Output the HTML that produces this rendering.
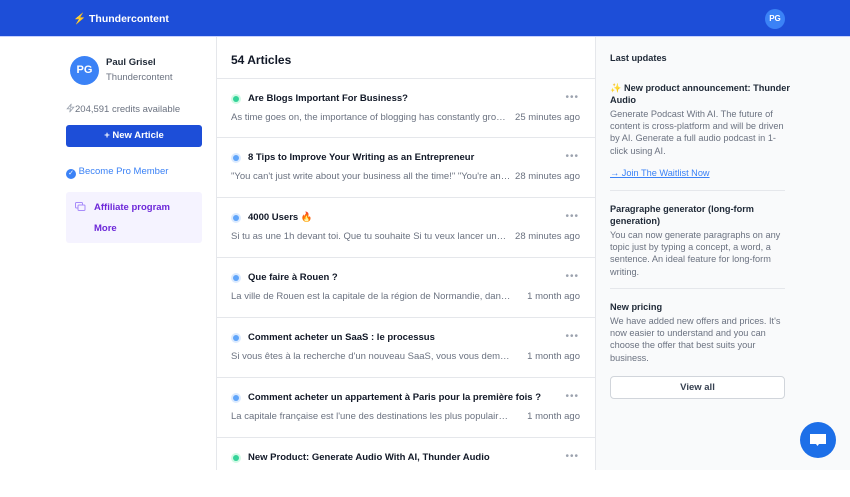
<!DOCTYPE html>
<html><head><style>
*{box-sizing:border-box;margin:0;padding:0}
body{width:850px;height:470px;overflow:hidden;font-family:"Liberation Sans",sans-serif;background:#fff;position:relative;color:#111827}
.hdr{position:absolute;left:0;top:0;width:850px;height:37px;background:#1d4ed8;border-bottom:1px solid #c7d2fe}
.abs{position:absolute;white-space:nowrap}
.left{position:absolute;left:0;top:37px;width:217px;height:433px;border-right:1px solid #e5e7eb}
.mid{position:absolute;left:217px;top:37px;width:378px;height:433px}
.right{position:absolute;left:595px;top:37px;width:255px;height:433px;background:#f9fafb;border-left:1px solid #e5e7eb}
.row{position:absolute;left:0;width:378px;height:60px;border-top:1px solid #e5e7eb}
.dot{position:absolute;left:16px;top:17px;width:6px;height:6px;border-radius:50%;box-shadow:0 0 0 2px}
.t{position:absolute;left:31px;top:14px;font-size:9.5px;font-weight:bold;color:#111827;white-space:nowrap}
.e{position:absolute;left:14px;top:33px;font-size:9.5px;color:#6b7280;width:280px;white-space:nowrap;overflow:hidden;text-overflow:ellipsis}
.tm{position:absolute;right:15px;top:33px;font-size:9.5px;color:#6b7280;white-space:nowrap}
.dd{position:absolute;right:16px;top:13px;font-size:10px;color:#9ca3af;letter-spacing:1px}
.rp{position:absolute;left:14px;width:180px;font-size:9.2px;line-height:12.2px;color:#6b7280}
.rt{position:absolute;left:14px;width:180px;font-size:9.2px;line-height:12.2px;font-weight:bold;color:#1f2937}
.sep{position:absolute;left:14px;width:175px;height:1px;background:#e5e7eb}
</style></head><body>
<div class="hdr">
<div class="abs" style="left:73px;top:12px;font-size:10.5px;font-weight:bold;color:#fff"><span style="color:#fbbf24">⚡</span> Thundercontent</div>
<div class="abs" style="left:765px;top:9px;width:20px;height:20px;border-radius:50%;background:#3b82f6;color:#fff;font-size:8px;font-weight:bold;text-align:center;line-height:20px">PG</div>
</div>
<div class="left">
<div class="abs" style="left:70px;top:19px;width:29px;height:29px;border-radius:50%;background:#3b82f6;color:#fff;font-size:11px;font-weight:bold;text-align:center;line-height:29px">PG</div>
<div class="abs" style="left:106px;top:20px;font-size:9.5px;font-weight:bold;color:#1f2937">Paul Grisel</div>
<div class="abs" style="left:106px;top:35px;font-size:9.5px;color:#6b7280">Thundercontent</div>
<div class="abs" style="left:66px;top:66px;font-size:9.5px;color:#6b7280"><svg width="9" height="10" viewBox="0 0 10 12" style="vertical-align:-1px"><path d="M6 1L1 7h4l-1 4 5-6H5z" fill="none" stroke="#9ca3af" stroke-width="1"/></svg>204,591 credits available</div>
<div class="abs" style="left:66px;top:88px;width:136px;height:22px;background:#1d4ed8;border-radius:3px;color:#fff;font-size:9.5px;font-weight:bold;text-align:center;line-height:22px">+ New Article</div>
<div class="abs" style="left:66px;top:129px;font-size:9.5px;color:#3b82f6"><span style="display:inline-block;width:10px;height:10px;border-radius:50%;background:#3b82f6;color:#fff;font-size:7px;text-align:center;line-height:10px;vertical-align:-1px">✓</span> Become Pro Member</div>
<div class="abs" style="left:66px;top:155px;width:136px;height:51px;background:#f5f3ff;border-radius:3px">
<svg class="abs" style="left:9px;top:10px" width="11" height="10" viewBox="0 0 11 10"><rect x="0.5" y="0.5" width="7" height="5.5" rx="1" fill="none" stroke="#a78bfa"/><rect x="3" y="3" width="7" height="5.5" rx="1" fill="#f5f3ff" stroke="#a78bfa"/></svg>
<div class="abs" style="left:28px;top:10px;font-size:9.5px;font-weight:bold;color:#6d28d9">Affiliate program</div>
<div class="abs" style="left:28px;top:31px;font-size:9.5px;font-weight:bold;color:#6d28d9">More</div>
</div>
</div>
<div class="mid">
<div class="abs" style="left:14px;top:16px;font-size:12px;font-weight:bold">54 Articles</div>
<div class="row" style="top:41px"><div class="dot" style="background:#34d399;color:#d1fae5"></div><div class="t">Are Blogs Important For Business?</div><div class="dd">•••</div><div class="e">As time goes on, the importance of blogging has constantly grown in the modern world</div><div class="tm">25 minutes ago</div></div>
<div class="row" style="top:100px"><div class="dot" style="background:#60a5fa;color:#dbeafe"></div><div class="t">8 Tips to Improve Your Writing as an Entrepreneur</div><div class="dd">•••</div><div class="e">"You can't just write about your business all the time!" "You're an entrepreneur"</div><div class="tm">28 minutes ago</div></div>
<div class="row" style="top:160px"><div class="dot" style="background:#60a5fa;color:#dbeafe"></div><div class="t">4000 Users 🔥</div><div class="dd">•••</div><div class="e">Si tu as une 1h devant toi. Que tu souhaite Si tu veux lancer une entreprise</div><div class="tm">28 minutes ago</div></div>
<div class="row" style="top:220px"><div class="dot" style="background:#60a5fa;color:#dbeafe"></div><div class="t">Que faire à Rouen ?</div><div class="dd">•••</div><div class="e">La ville de Rouen est la capitale de la région de Normandie, dans le nord de la France</div><div class="tm">1 month ago</div></div>
<div class="row" style="top:280px"><div class="dot" style="background:#60a5fa;color:#dbeafe"></div><div class="t">Comment acheter un SaaS : le processus</div><div class="dd">•••</div><div class="e">Si vous êtes à la recherche d'un nouveau SaaS, vous vous demandez peut-être</div><div class="tm">1 month ago</div></div>
<div class="row" style="top:340px"><div class="dot" style="background:#60a5fa;color:#dbeafe"></div><div class="t">Comment acheter un appartement à Paris pour la première fois ?</div><div class="dd">•••</div><div class="e">La capitale française est l'une des destinations les plus populaires pour les</div><div class="tm">1 month ago</div></div>
<div class="row" style="top:400px"><div class="dot" style="background:#34d399;color:#d1fae5"></div><div class="t">New Product: Generate Audio With AI, Thunder Audio</div><div class="dd">•••</div></div>
</div>
<div class="right">
<div class="rt" style="top:15px">Last updates</div>
<div class="rt" style="top:45px"><span style="color:#fbbf24">✨</span> New product announcement: Thunder Audio</div>
<div class="rp" style="top:71px">Generate Podcast With AI. The future of content is cross-platform and will be driven by AI. Generate a full audio podcast in 1-click using AI.</div>
<div class="rp" style="top:130px;color:#3b82f6;text-decoration:underline">→ Join The Waitlist Now</div>
<div class="sep" style="top:153px"></div>
<div class="rt" style="top:166px">Paragraphe generator (long-form generation)</div>
<div class="rp" style="top:192px">You can now generate paragraphs on any topic just by typing a concept, a word, a sentence. An ideal feature for long-form writing.</div>
<div class="sep" style="top:251px"></div>
<div class="rt" style="top:264px">New pricing</div>
<div class="rp" style="top:278px">We have added new offers and prices. It's now easier to understand and you can choose the offer that best suits your business.</div>
<div class="abs" style="left:14px;top:339px;width:175px;height:23px;background:#fff;border:1px solid #d1d5db;border-radius:4px;font-size:9.5px;font-weight:bold;color:#374151;text-align:center;line-height:21px">View all</div>
</div>
<div class="abs" style="left:800px;top:422px;width:36px;height:36px;border-radius:50%;background:#1d6fe8">
<svg width="36" height="36" viewBox="0 0 36 36"><path d="M10 12h16v10h-7l-1.5 2-1.5-2h-6z" fill="#fff"/></svg></div>
</body></html>
